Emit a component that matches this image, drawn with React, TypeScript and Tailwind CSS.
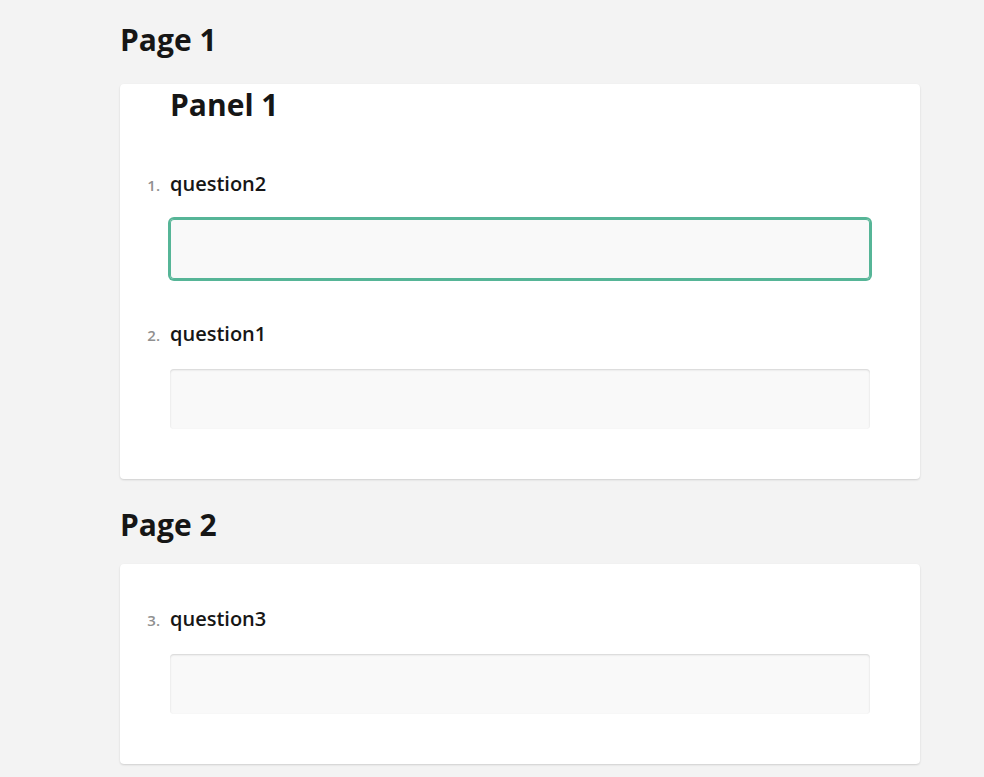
import React from "react"

type Question = { no: number; title: string; focused?: boolean }

function QuestionRow({ q }: { q: Question }) {
  return (
    <div>
      <div className="flex items-baseline">
        <span className="w-[50px] pr-[10px] text-right text-[15px] font-semibold text-[#909090]">{q.no}.</span>
        <span className="text-[20px] font-semibold leading-[30px] text-[#161616]">{q.title}</span>
      </div>
      <div className="pl-[50px] pt-[20px]">
        <div
          className={`h-[60px] rounded-[4px] bg-[#f9f9f9] ${
            q.focused
              ? "shadow-[inset_0_0_0_1px_#56b597,0_0_0_2px_#56b597]"
              : "shadow-[inset_0_1px_2px_rgba(0,0,0,0.15)]"
          }`}
        />
      </div>
    </div>
  )
}

export default function App() {
  return (
    <div className="min-h-screen bg-[#f3f3f3] pb-10 pl-[120px] font-['Open_Sans',sans-serif] text-[#161616]">
      <div className="w-[800px]">
        {/* Page 1 */}
        <h2 className="pt-[20px] text-[30px] font-bold leading-[40px]">Page 1</h2>
        <div className="mt-[24px] rounded-[4px] bg-white pb-[50px] pr-[50px] shadow-[0_1px_2px_rgba(0,0,0,0.15)]">
          <h3 className="pl-[50px] pt-px text-[30px] font-bold leading-[40px]">Panel 1</h3>
          <div className="mt-[44px] flex flex-col gap-[40px]">
            <QuestionRow q={{ no: 1, title: "question2", focused: true }} />
            <QuestionRow q={{ no: 2, title: "question1" }} />
          </div>
        </div>

        {/* Page 2 */}
        <h2 className="mt-[26px] text-[30px] font-bold leading-[40px]">Page 2</h2>
        <div className="mt-[19px] rounded-[4px] bg-white pb-[50px] pr-[50px] pt-[40px] shadow-[0_1px_2px_rgba(0,0,0,0.15)]">
          <QuestionRow q={{ no: 3, title: "question3" }} />
        </div>
      </div>
    </div>
  )
}
